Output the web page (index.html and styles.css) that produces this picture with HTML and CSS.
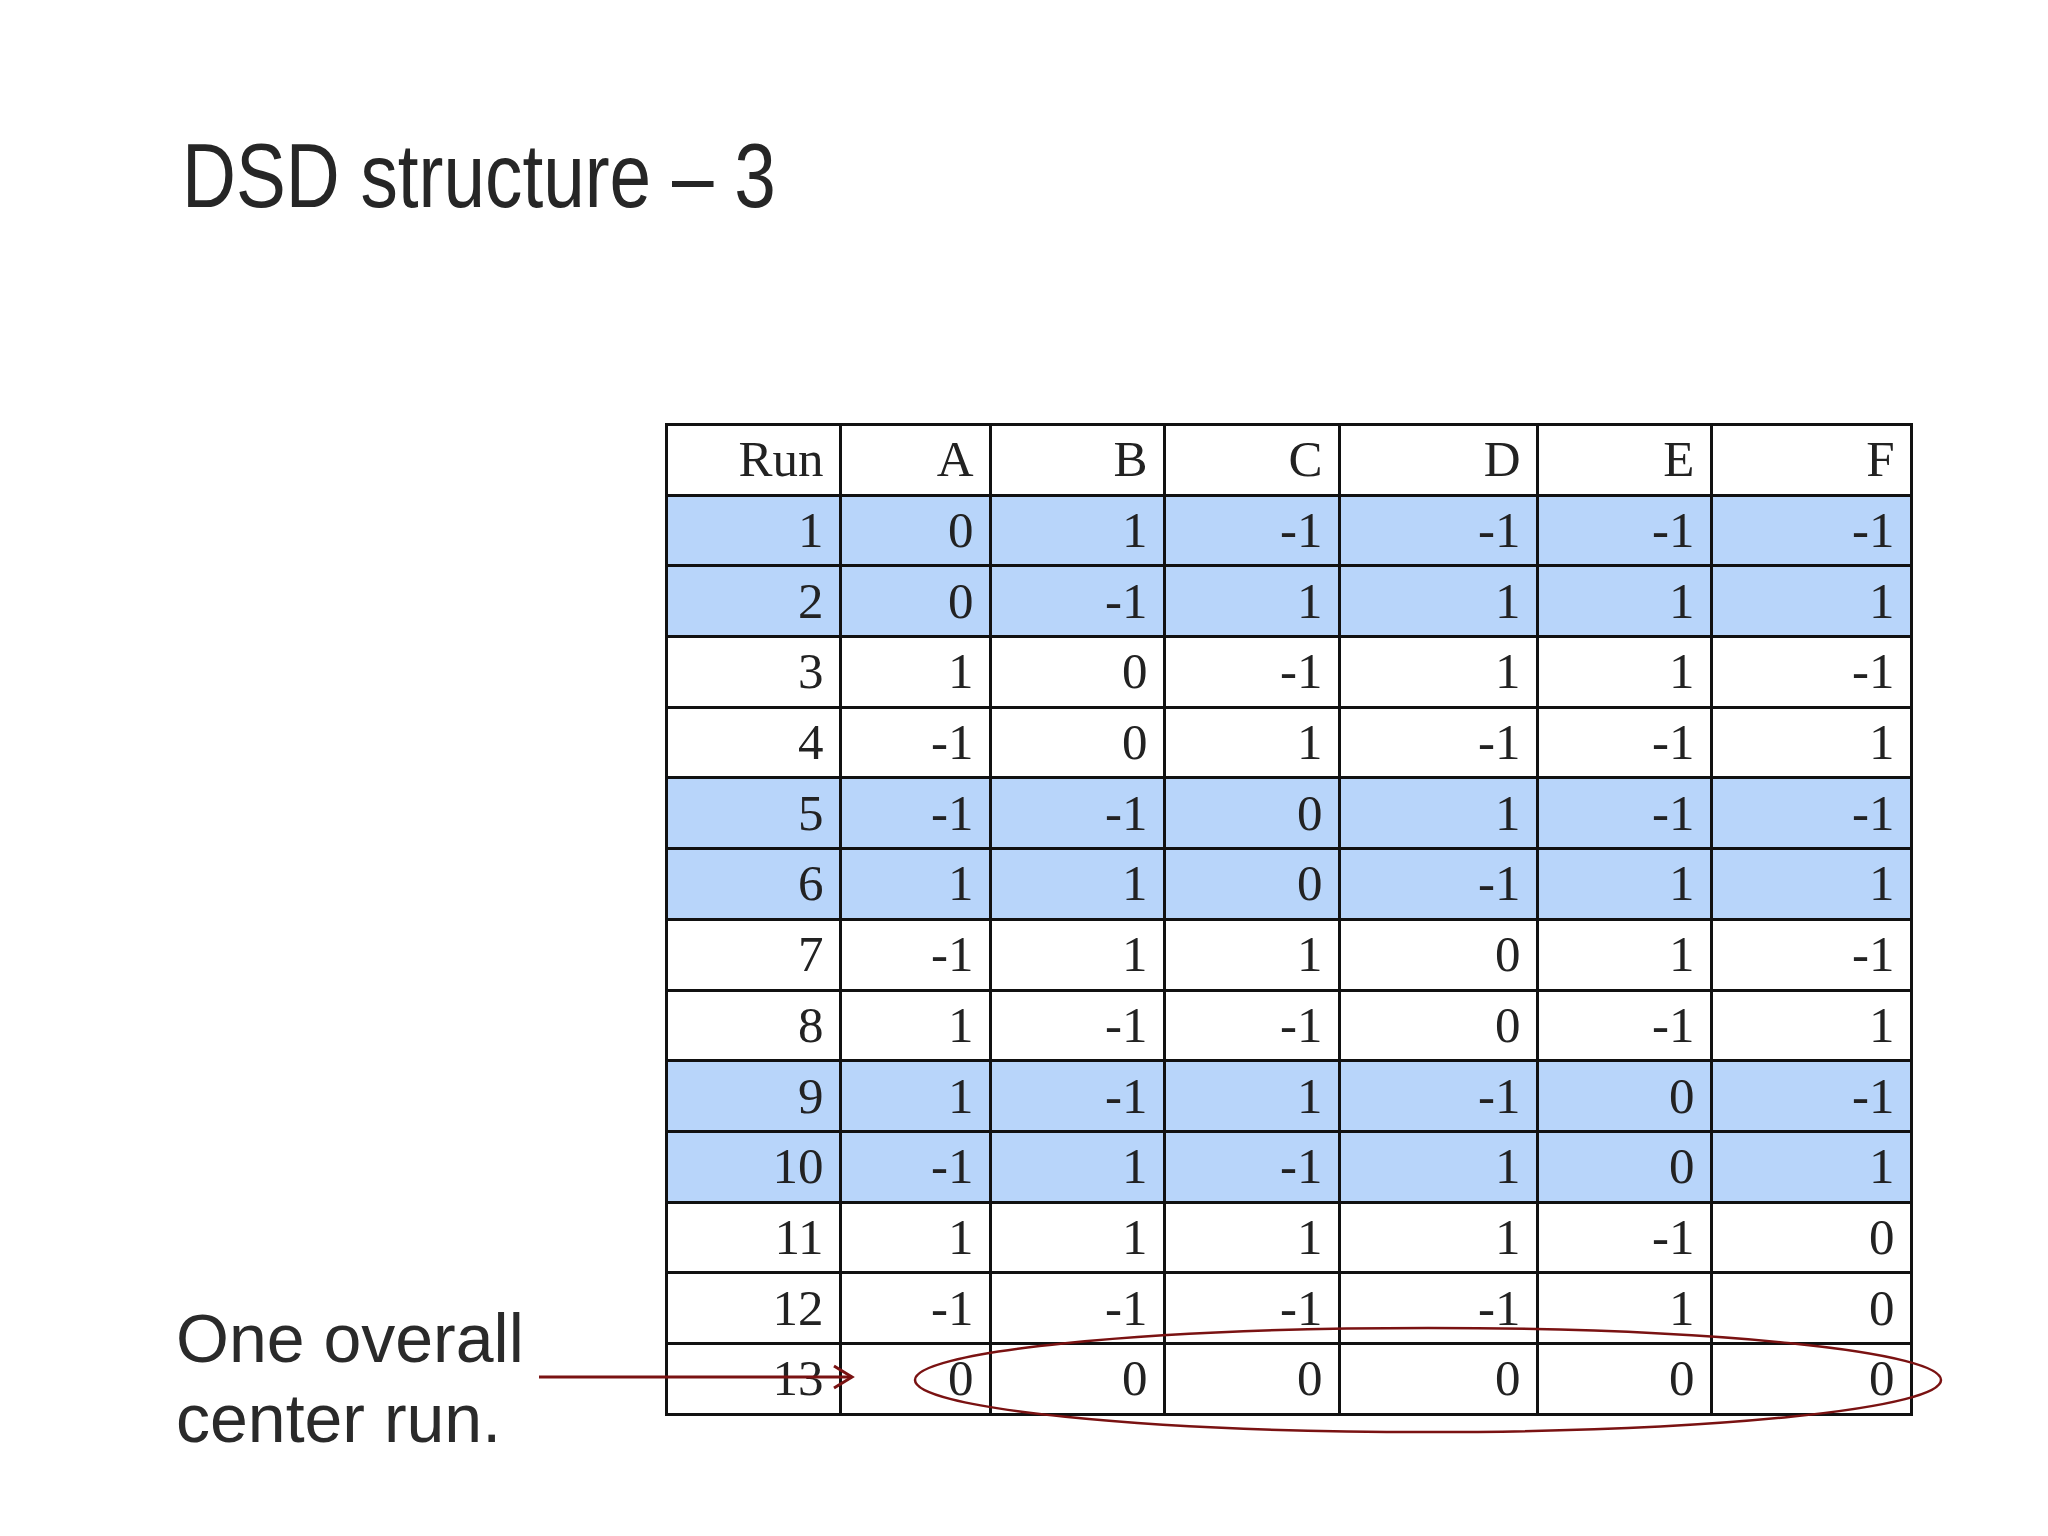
FILE: index.html
```html
<!DOCTYPE html>
<html>
<head>
<meta charset="utf-8">
<link rel="stylesheet" href="styles.css">
</head>
<body>
<div class="slide">
  <h1 class="title"><span class="title-text">DSD structure – 3</span></h1>
  <div class="content">
    <p class="caption">One overall<br>center run.</p>
    <table class="dsd">
      <colgroup>
        <col class="c-run"><col class="c-a"><col class="c-b"><col class="c-c"><col class="c-d"><col class="c-e"><col class="c-f">
      </colgroup>
      <tr><td>Run</td><td>A</td><td>B</td><td>C</td><td>D</td><td>E</td><td>F</td></tr>
      <tr class="hl"><td>1</td><td>0</td><td>1</td><td>-1</td><td>-1</td><td>-1</td><td>-1</td></tr>
      <tr class="hl"><td>2</td><td>0</td><td>-1</td><td>1</td><td>1</td><td>1</td><td>1</td></tr>
      <tr><td>3</td><td>1</td><td>0</td><td>-1</td><td>1</td><td>1</td><td>-1</td></tr>
      <tr><td>4</td><td>-1</td><td>0</td><td>1</td><td>-1</td><td>-1</td><td>1</td></tr>
      <tr class="hl"><td>5</td><td>-1</td><td>-1</td><td>0</td><td>1</td><td>-1</td><td>-1</td></tr>
      <tr class="hl"><td>6</td><td>1</td><td>1</td><td>0</td><td>-1</td><td>1</td><td>1</td></tr>
      <tr><td>7</td><td>-1</td><td>1</td><td>1</td><td>0</td><td>1</td><td>-1</td></tr>
      <tr><td>8</td><td>1</td><td>-1</td><td>-1</td><td>0</td><td>-1</td><td>1</td></tr>
      <tr class="hl"><td>9</td><td>1</td><td>-1</td><td>1</td><td>-1</td><td>0</td><td>-1</td></tr>
      <tr class="hl"><td>10</td><td>-1</td><td>1</td><td>-1</td><td>1</td><td>0</td><td>1</td></tr>
      <tr><td>11</td><td>1</td><td>1</td><td>1</td><td>1</td><td>-1</td><td>0</td></tr>
      <tr><td>12</td><td>-1</td><td>-1</td><td>-1</td><td>-1</td><td>1</td><td>0</td></tr>
      <tr><td>13</td><td>0</td><td>0</td><td>0</td><td>0</td><td>0</td><td>0</td></tr>
    </table>
  </div>
  <svg class="annot" width="2048" height="1536" viewBox="0 0 2048 1536">
    <ellipse cx="1428" cy="1380" rx="513" ry="52" fill="none" stroke="#7a1212" stroke-width="2.5"/>
    <line x1="539" y1="1377" x2="852" y2="1377" stroke="#7a1212" stroke-width="3"/>
    <polyline points="834,1366 852,1377 834,1388" fill="none" stroke="#7a1212" stroke-width="3"/>
  </svg>
</div>
</body>
</html>
```
FILE: styles.css
```css
html, body {
  margin: 0;
  padding: 0;
  background: #ffffff;
}

.slide {
  position: relative;
  width: 2048px;
  height: 1536px;
  overflow: hidden;
  background: #ffffff;
}

.title {
  margin: 0;
  padding: 130px 0 0 182px;
  font-family: "Liberation Sans", Arial, sans-serif;
  font-weight: normal;
  font-size: 91px;
  line-height: 91px;
  color: #262626;
  white-space: nowrap;
}

.title-text {
  display: inline-block;
  transform: scaleX(0.821);
  transform-origin: left center;
}

.content {
  display: flex;
  align-items: flex-start;
  margin-top: 202px;
}

.caption {
  margin: 875px 0 0 0;
  padding-left: 176px;
  width: 488.5px;
  flex: 0 0 488.5px;
  font-family: "Liberation Sans", Arial, sans-serif;
  font-size: 68px;
  line-height: 80px;
  color: #2a2a2a;
  white-space: nowrap;
}

.dsd {
  border-collapse: collapse;
  table-layout: fixed;
  width: 1245px;
  font-family: "Liberation Serif", "Times New Roman", serif;
  font-size: 51px;
  color: #222222;
}

.dsd td {
  border: 3px solid #111111;
  height: 70.7px;
  padding: 0 15px 0 0;
  text-align: right;
  vertical-align: middle;
  line-height: 1;
  box-sizing: border-box;
}

.dsd tr.hl td {
  background: #b8d5fa;
}

.c-run { width: 174px; }
.c-a { width: 150px; }
.c-b { width: 174px; }
.c-c { width: 175px; }
.c-d { width: 198px; }
.c-e { width: 174px; }
.c-f { width: 200px; }

.annot {
  position: absolute;
  left: 0;
  top: 0;
  pointer-events: none;
}
```
